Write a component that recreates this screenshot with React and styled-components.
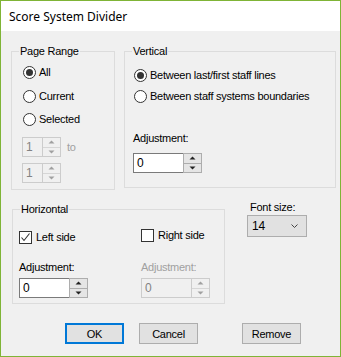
import React from 'react';
import styled, { createGlobalStyle } from 'styled-components';

const Global = createGlobalStyle`
  html, body { margin: 0; padding: 0; background: #ffffff; }
  body { width: 341px; height: 357px; overflow: hidden; }
`;

const Window = styled.div`
  width: 341px;
  height: 357px;
  box-sizing: border-box;
  border: 1px solid #7fb436;
  background: #f0f0f0;
  display: flex;
  flex-direction: column;
  font-family: "Liberation Sans", Arial, sans-serif;
  font-size: 11px;
  letter-spacing: -0.25px;
  color: #000000;
`;

const TitleBar = styled.div`
  height: 30px;
  flex: none;
  background: #ffffff;
  display: flex;
  align-items: center;
  padding-left: 8px;
  font-family: "Segoe UI", "Noto Sans", sans-serif;
  font-size: 12px;
  letter-spacing: 0;
  color: #000000;
`;

const Body = styled.div`
  display: flex;
  flex-direction: column;
  padding: 20px 4px 0 10px;
`;

const Row = styled.div`
  display: flex;
  align-items: flex-start;
  margin-top: ${(p) => p.$mt || 0}px;
  padding-left: ${(p) => p.$pl || 0}px;
`;

const Group = styled.div`
  box-sizing: border-box;
  width: ${(p) => p.$w}px;
  height: ${(p) => p.$h}px;
  margin: ${(p) => p.$mt || 0}px 0 0 ${(p) => p.$ml || 0}px;
  border: 1px solid #dcdcdc;
  display: flex;
  flex-direction: column;
  align-items: flex-start;
`;

const Legend = styled.div`
  margin: -7px 0 0 7px;
  padding: 0 1px;
  height: 13px;
  line-height: 13px;
  background: #f0f0f0;
  white-space: nowrap;
`;

const OptionRow = styled.div`
  display: flex;
  align-items: center;
  gap: ${(p) => p.$gap ?? 3}px;
  height: 13px;
  line-height: 13px;
  margin: ${(p) => p.$mt || 0}px 0 0 ${(p) => p.$ml || 0}px;
  white-space: nowrap;
  color: ${(p) => (p.$disabled ? '#a0a0a0' : '#000000')};
`;

const RadioCircle = styled.span`
  box-sizing: border-box;
  width: 13px;
  height: 13px;
  flex: none;
  border-radius: 50%;
  border: 1px solid #333333;
  background: #ffffff;
  display: flex;
  align-items: center;
  justify-content: center;
`;

const RadioDot = styled.span`
  width: 7px;
  height: 7px;
  border-radius: 50%;
  background: #333333;
`;

const CheckSquare = styled.span`
  box-sizing: border-box;
  width: 13px;
  height: 13px;
  flex: none;
  border: 1px solid #333333;
  background: #ffffff;
  display: flex;
  align-items: center;
  justify-content: center;
`;

const Label = styled.div`
  height: 13px;
  line-height: 13px;
  margin: ${(p) => p.$mt || 0}px 0 0 ${(p) => p.$ml || 0}px;
  color: ${(p) => (p.$disabled ? '#a0a0a0' : '#000000')};
  white-space: nowrap;
`;

const SpinLine = styled.div`
  display: flex;
  align-items: center;
  gap: 6px;
  margin: ${(p) => p.$mt || 0}px 0 0 ${(p) => p.$ml || 0}px;
`;

const SpinBox = styled.div`
  display: flex;
  height: 20px;
  width: ${(p) => p.$w}px;
  margin: ${(p) => p.$mt || 0}px 0 0 ${(p) => p.$ml || 0}px;
  flex: none;
`;

const SpinField = styled.div`
  flex: 1;
  box-sizing: border-box;
  border: 1px solid ${(p) => (p.$disabled ? '#cccccc' : '#7a7a7a')};
  border-right: none;
  background: ${(p) => (p.$disabled ? '#f0f0f0' : '#ffffff')};
  color: ${(p) => (p.$disabled ? '#838383' : '#000000')};
  padding-left: 3px;
  line-height: 18px;
  font-size: 12px;
`;

const SpinButtons = styled.div`
  box-sizing: border-box;
  width: 19px;
  flex: none;
  border: 1px solid ${(p) => (p.$disabled ? '#cccccc' : '#adadad')};
  display: flex;
  flex-direction: column;
  background: ${(p) => (p.$disabled ? '#f0f0f0' : '#e5e5e5')};
`;

const SpinHalf = styled.div`
  flex: 1;
  display: flex;
  align-items: center;
  justify-content: center;
  border-top: ${(p) => (p.$lower ? `1px solid ${p.$disabled ? '#d6d6d6' : '#adadad'}` : 'none')};
`;

const Combo = styled.div`
  box-sizing: border-box;
  width: 60px;
  height: 22px;
  margin-top: 1px;
  border: 1px solid #adadad;
  background: #e1e1e1;
  display: flex;
  align-items: center;
  justify-content: space-between;
  padding: 0 8px 0 4px;
  font-size: 12px;
`;

const Column = styled.div`
  display: flex;
  flex-direction: column;
  align-items: flex-start;
  width: ${(p) => (p.$w ? `${p.$w}px` : 'auto')};
  margin: ${(p) => p.$mt || 0}px 0 0 ${(p) => p.$ml || 0}px;
`;

const Columns = styled.div`
  display: flex;
  padding-left: 6px;
`;

const Button = styled.button`
  box-sizing: border-box;
  width: 59px;
  height: 21px;
  margin: 0 0 0 ${(p) => p.$ml || 0}px;
  padding: 0;
  border: ${(p) => (p.$default ? '2px solid #0078d7' : '1px solid #adadad')};
  background: #e1e1e1;
  font-family: "Liberation Sans", Arial, sans-serif;
  font-size: 11px;
  letter-spacing: -0.25px;
  color: #000000;
  display: flex;
  align-items: center;
  justify-content: center;
`;

const Arrow = ({ down, disabled }) => (
  <svg width="7" height="4" viewBox="0 0 7 4">
    <polygon
      points={down ? '0.5,0.5 6.5,0.5 3.5,3.5' : '3.5,0.5 6.5,3.5 0.5,3.5'}
      fill={disabled ? '#a0a0a0' : '#222222'}
    />
  </svg>
);

const Spinner = ({ value, w, disabled, mt, ml }) => (
  <SpinBox $w={w} $mt={mt} $ml={ml}>
    <SpinField $disabled={disabled}>{value}</SpinField>
    <SpinButtons $disabled={disabled}>
      <SpinHalf>
        <Arrow disabled={disabled} />
      </SpinHalf>
      <SpinHalf $lower $disabled={disabled}>
        <Arrow down disabled={disabled} />
      </SpinHalf>
    </SpinButtons>
  </SpinBox>
);

const Radio = ({ checked, children, mt, ml }) => (
  <OptionRow $mt={mt} $ml={ml}>
    <RadioCircle>{checked && <RadioDot />}</RadioCircle>
    <span>{children}</span>
  </OptionRow>
);

const Checkbox = ({ checked, children, mt, ml }) => (
  <OptionRow $mt={mt} $ml={ml} $gap={4}>
    <CheckSquare>
      {checked && (
        <svg width="11" height="11" viewBox="0 0 11 11">
          <polyline points="1.5,5.5 4,8.5 9.5,1.5" fill="none" stroke="#333333" strokeWidth="1.1" />
        </svg>
      )}
    </CheckSquare>
    <span>{children}</span>
  </OptionRow>
);

export default function App() {
  return (
    <>
      <Global />
      <Window>
        <TitleBar>Score System Divider</TitleBar>
        <Body>
          <Row>
            <Group $w={104} $h={139}>
              <Legend>Page Range</Legend>
              <Radio checked mt={8} ml={11}>All</Radio>
              <Radio mt={11} ml={11}>Current</Radio>
              <Radio mt={10} ml={11}>Selected</Radio>
              <SpinLine $mt={11} $ml={10}>
                <Spinner value="1" w={39} disabled />
                <Label $disabled>to</Label>
              </SpinLine>
              <Spinner value="1" w={39} disabled mt={6} ml={10} />
            </Group>
            <Group $w={212} $h={137} $ml={9}>
              <Legend>Vertical</Legend>
              <Radio checked mt={11} ml={9}>Between last/first staff lines</Radio>
              <Radio mt={8} ml={9}>Between staff systems boundaries</Radio>
              <Label $mt={29} $ml={8}>Adjustment:</Label>
              <Spinner value="0" w={69} mt={8} ml={8} />
            </Group>
          </Row>
          <Row>
            <Group $w={213} $h={95} $mt={19} $ml={1}>
              <Legend>Horizontal</Legend>
              <Columns>
                <Column $w={122}>
                  <Checkbox checked mt={15}>Left side</Checkbox>
                  <Label $mt={17}>Adjustment:</Label>
                  <Spinner value="0" w={69} mt={4} />
                </Column>
                <Column>
                  <Checkbox mt={13}>Right side</Checkbox>
                  <Label $mt={19} $disabled>Adjustment:</Label>
                  <Spinner value="0" w={69} mt={4} disabled />
                </Column>
              </Columns>
            </Group>
            <Column $mt={11} $ml={22}>
              <Label $ml={3}>Font size:</Label>
              <Combo>
                <span>14</span>
                <svg width="7" height="4" viewBox="0 0 7 4">
                  <polyline points="0.5,0.5 3.5,3.5 6.5,0.5" fill="none" stroke="#444444" strokeWidth="1" />
                </svg>
              </Combo>
            </Column>
          </Row>
          <Row $mt={19} $pl={54}>
            <Button $default>OK</Button>
            <Button $ml={15}>Cancel</Button>
            <Button $ml={44}>Remove</Button>
          </Row>
        </Body>
      </Window>
    </>
  );
}
